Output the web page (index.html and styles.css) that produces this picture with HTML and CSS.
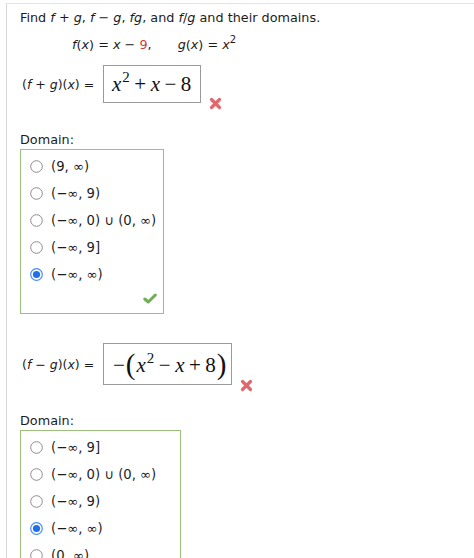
FILE: index.html
```html
<!DOCTYPE html>
<html>
<head>
<meta charset="utf-8">
<link rel="stylesheet" href="styles.css">
</head>
<body>
<div class="frame">
  <div class="q">Find <i>f</i> + <i>g</i>, <i>f</i> − <i>g</i>, <i>fg</i>, and <i>f</i>/<i>g</i> and their domains.</div>
  <div class="given"><i>f</i>(<i>x</i>) = <i>x</i> − <span class="red">9</span>,<span class="sp"></span><i>g</i>(<i>x</i>) = <i>x</i><sup>2</sup></div>

  <div class="ansrow r1">
    <span class="lbl">(<i>f</i> + <i>g</i>)(<i>x</i>) =</span>
    <span class="mbox mb1"><span class="math"><span class="mi">x</span><sup class="msup">2</sup><span class="mo">+</span><span class="mi">x</span><span class="mo">−</span>8</span></span>
    <svg class="wrong" width="13" height="13" viewBox="0 0 13 13"><path d="M2.5 2.5 L10.5 10.5 M10.5 2.5 L2.5 10.5" stroke="#e2676c" stroke-width="3.2" stroke-linecap="round"/></svg>
  </div>

  <div class="dlabel d1">Domain:</div>
  <div class="dbox w1">
    <div class="opt"><svg class="rad" width="13" height="13" viewBox="0 0 13 13"><circle cx="6.5" cy="6.5" r="5.8" fill="#fff" stroke="#8c8c8c" stroke-width="1"/></svg><span>(9, ∞)</span></div>
    <div class="opt"><svg class="rad" width="13" height="13" viewBox="0 0 13 13"><circle cx="6.5" cy="6.5" r="5.8" fill="#fff" stroke="#8c8c8c" stroke-width="1"/></svg><span>(−∞, 9)</span></div>
    <div class="opt"><svg class="rad" width="13" height="13" viewBox="0 0 13 13"><circle cx="6.5" cy="6.5" r="5.8" fill="#fff" stroke="#8c8c8c" stroke-width="1"/></svg><span>(−∞, 0) ∪ (0, ∞)</span></div>
    <div class="opt"><svg class="rad" width="13" height="13" viewBox="0 0 13 13"><circle cx="6.5" cy="6.5" r="5.8" fill="#fff" stroke="#8c8c8c" stroke-width="1"/></svg><span>(−∞, 9]</span></div>
    <div class="opt"><svg class="rad" width="13" height="13" viewBox="0 0 13 13"><circle cx="6.5" cy="6.5" r="5.8" fill="#fff" stroke="#4a8cf0" stroke-width="1.2"/><circle cx="6.5" cy="6.5" r="3.6" fill="#1f6fe8"/></svg><span>(−∞, ∞)</span></div>
    <div class="checkrow"><svg width="14" height="11" viewBox="0 0 14 11"><path d="M1.8 6 L5.3 9 L12.3 2" fill="none" stroke="#6fae55" stroke-width="3" stroke-linecap="round" stroke-linejoin="round"/></svg></div>
  </div>

  <div class="ansrow r2">
    <span class="lbl">(<i>f</i> − <i>g</i>)(<i>x</i>) =</span>
    <span class="mbox mb2"><span class="math">−<span class="paren">(</span><span class="mi">x</span><sup class="msup">2</sup><span class="mo">−</span><span class="mi">x</span><span class="mo">+</span>8<span class="paren">)</span></span></span>
    <svg class="wrong" width="13" height="13" viewBox="0 0 13 13"><path d="M2.5 2.5 L10.5 10.5 M10.5 2.5 L2.5 10.5" stroke="#e2676c" stroke-width="3.2" stroke-linecap="round"/></svg>
  </div>

  <div class="dlabel d2">Domain:</div>
  <div class="dbox w2">
    <div class="opt"><svg class="rad" width="13" height="13" viewBox="0 0 13 13"><circle cx="6.5" cy="6.5" r="5.8" fill="#fff" stroke="#8c8c8c" stroke-width="1"/></svg><span>(−∞, 9]</span></div>
    <div class="opt"><svg class="rad" width="13" height="13" viewBox="0 0 13 13"><circle cx="6.5" cy="6.5" r="5.8" fill="#fff" stroke="#8c8c8c" stroke-width="1"/></svg><span>(−∞, 0) ∪ (0, ∞)</span></div>
    <div class="opt"><svg class="rad" width="13" height="13" viewBox="0 0 13 13"><circle cx="6.5" cy="6.5" r="5.8" fill="#fff" stroke="#8c8c8c" stroke-width="1"/></svg><span>(−∞, 9)</span></div>
    <div class="opt"><svg class="rad" width="13" height="13" viewBox="0 0 13 13"><circle cx="6.5" cy="6.5" r="5.8" fill="#fff" stroke="#4a8cf0" stroke-width="1.2"/><circle cx="6.5" cy="6.5" r="3.6" fill="#1f6fe8"/></svg><span>(−∞, ∞)</span></div>
    <div class="opt"><svg class="rad" width="13" height="13" viewBox="0 0 13 13"><circle cx="6.5" cy="6.5" r="5.8" fill="#fff" stroke="#8c8c8c" stroke-width="1"/></svg><span>(0, ∞)</span></div>
  </div>
</div>
</body>
</html>
```

FILE: styles.css
```css
html, body {
  margin: 0;
  padding: 0;
  background: #fff;
  overflow: hidden;
}
body {
  font-family: "DejaVu Sans", Verdana, sans-serif;
  font-size: 12.5px;
  color: #1c1c1c;
}
.frame {
  margin: 3px 0 0 6px;
  border-top: 1px solid #e4e4e4;
  border-left: 1px solid #d6d6d6;
  padding: 5px 0 0 13px;
  height: 700px;
}
.q {
  line-height: 18px;
  font-size: 12.8px;
}
.given {
  margin-top: 9px;
  padding-left: 52px;
  line-height: 18px;
  font-size: 12.8px;
}
.given sup {
  font-size: 10px;
  vertical-align: 6px;
  line-height: 0;
}
.red { color: #d23a35; }
.sp { display: inline-block; width: 26px; }
.ansrow {
  display: flex;
  align-items: center;
}
.r1 { margin-top: 11px; }
.r2 { margin-top: 29px; }
.lbl {
  padding-left: 2px;
  width: 81px;
  font-size: 12.5px;
}
.mbox {
  display: flex;
  align-items: center;
  box-sizing: border-box;
  border: 1px solid #9a9a9a;
  font-family: "Liberation Serif", "Times New Roman", serif;
  font-size: 21px;
  color: #111;
  padding-left: 8px;
  white-space: nowrap;
}
.mb1 { width: 98px; height: 38px; }
.mb2 { width: 129px; height: 42px; padding-left: 9px; }
.math {
  line-height: 1;
}
.mi { font-style: italic; }
.msup {
  font-size: 15px;
  line-height: 0;
  vertical-align: 9px;
  margin-left: 1px;
}
.mo { margin: 0 4.5px; }
.paren {
  display: inline-block;
  font-size: 29px;
  line-height: 1;
  vertical-align: -2px;
  margin: 0 1px;
}
.wrong {
  align-self: flex-end;
  margin-left: 8px;
  margin-bottom: -7px;
}
.dlabel {
  line-height: 18px;
  font-size: 12.8px;
}
.d1 { margin-top: 28px; }
.d2 { margin-top: 27px; }
.dbox {
  box-sizing: border-box;
  border: 1px solid #9cc07b;
  padding-top: 3px;
}
.w1 { width: 144px; height: 165px; }
.w2 { width: 161px; height: 200px; }
.opt {
  display: flex;
  align-items: center;
  height: 27px;
  padding-left: 9px;
  gap: 8px;
  white-space: nowrap;
  font-size: 13.2px;
}
.rad { flex: none; }
.checkrow {
  display: flex;
  justify-content: flex-end;
  padding: 5px 6px 0 0;
}
```
